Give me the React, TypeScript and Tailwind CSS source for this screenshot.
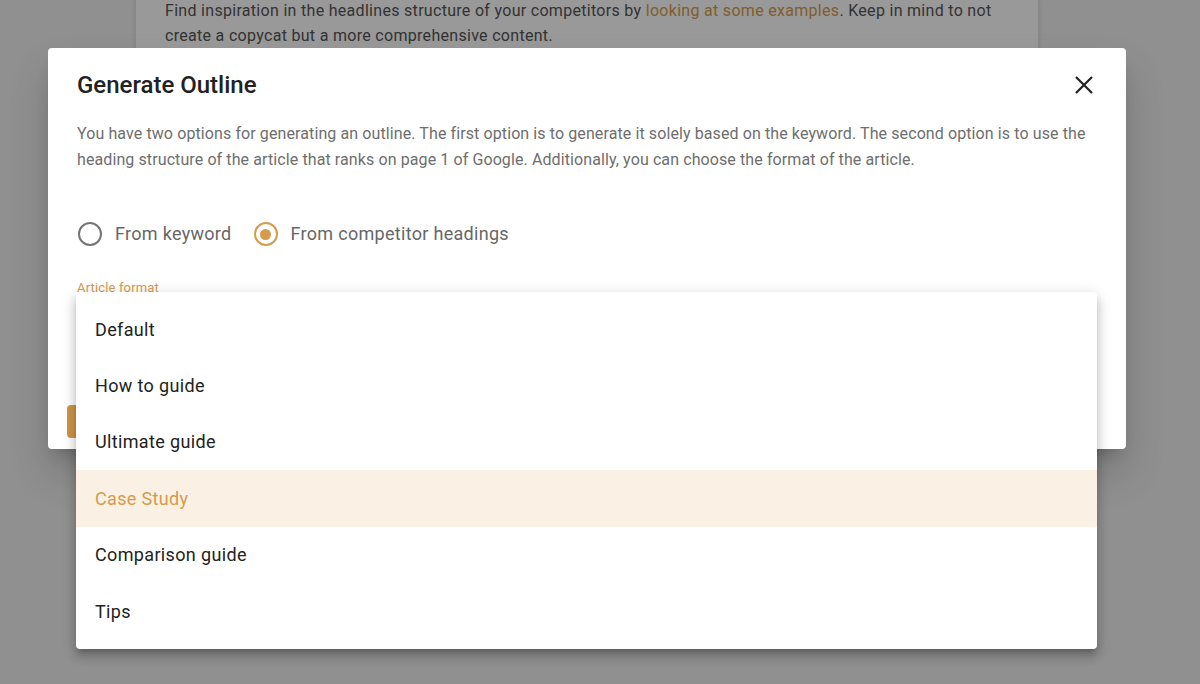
import type { ReactNode } from 'react';

const formats = ['Default', 'How to guide', 'Ultimate guide', 'Case Study', 'Comparison guide', 'Tips'];

function Radio({ checked, children }: { checked?: boolean; children: ReactNode }) {
  return (
    <label className="flex items-center gap-[13px]">
      <span
        className={
          checked
            ? 'flex h-[24px] w-[24px] items-center justify-center rounded-full border-2 border-[#d59b4c]'
            : 'flex h-[24px] w-[24px] items-center justify-center rounded-full border-2 border-[#757575]'
        }
      >
        {checked && <span className="h-[11px] w-[11px] rounded-full bg-[#d59b4c]" />}
      </span>
      <span className="text-[18px] leading-[24px] tracking-[0.3px] text-[#676767]">{children}</span>
    </label>
  );
}

export default function App() {
  return (
    <div className="relative h-[684px] w-[1200px] overflow-hidden bg-[#f0f0f0] font-['Roboto',sans-serif]">
      {/* page behind the modal */}
      <div className="ml-[136px] h-[600px] w-[902px] bg-white px-[29px] shadow-[0_0_6px_rgba(0,0,0,0.15)]">
        <p className="-mt-[2px] text-[16px] leading-[25px] tracking-[0.3px] text-[#555]">
          Find inspiration in the headlines structure of your competitors by{' '}
          <span className="text-[#d59b4c]">looking at some examples</span>. Keep in mind to not create a copycat but a
          more comprehensive content.
        </p>
      </div>

      {/* backdrop */}
      <div className="absolute inset-0 bg-black/40 pl-[48px] pt-[48px]">
        <div className="relative h-[401px] w-[1078px] rounded-[4px] bg-white px-[29px] pt-[21px] shadow-[0_11px_15px_-7px_rgba(0,0,0,0.2),0_24px_38px_3px_rgba(0,0,0,0.14)]">
          <div className="flex items-center justify-between">
            <h2 className="text-[24px] font-medium leading-[32px] text-[#222]">Generate Outline</h2>
            <button className="-mr-[1px] flex h-[28px] w-[28px] items-center justify-center text-[#222]">
              <svg width="18" height="18" viewBox="0 0 18 18" fill="none" stroke="currentColor" strokeWidth="2.2">
                <path d="M1 1L17 17M17 1L1 17" />
              </svg>
            </button>
          </div>
          <p className="mt-[20px] text-[16px] leading-[26px] tracking-[0.1px] text-[#6e6e6e]">
            You have two options for generating an outline. The first option is to generate it solely based on the
            keyword. The second option is to use the heading structure of the article that ranks on page 1 of Google.
            Additionally, you can choose the format of the article.
          </p>
          <div className="mt-[40px] flex h-[42px] items-center gap-[22px] pl-[1px]">
            <Radio>From keyword</Radio>
            <Radio checked>From competitor headings</Radio>
          </div>
          <div className="mt-[25px] text-[13px] leading-[16px] tracking-[0.15px] text-[#d59b4c]">Article format</div>
          <div className="mt-[6px] h-[50px] w-[1020px] rounded-[4px] border-2 border-[#d59b4c]" />
          <div className="-ml-[10px] mt-[53px] h-[33px] w-[140px] rounded-[4px] bg-[#cf9548]" />
        </div>
      </div>

      {/* dropdown menu */}
      <div className="absolute left-[76px] top-[292px] w-[1021px] rounded-[4px] bg-white pb-[10px] pt-[9px] shadow-[0_5px_5px_-3px_rgba(0,0,0,0.2),0_8px_10px_1px_rgba(0,0,0,0.14),0_3px_14px_2px_rgba(0,0,0,0.12)]">
        {formats.map((f) => (
          <div
            key={f}
            className={
              f === 'Case Study'
                ? 'flex h-[56.4px] items-center bg-[#faf1e4] px-[19px] text-[18px] tracking-[0.35px] text-[#d59b4c]'
                : 'flex h-[56.4px] items-center px-[19px] text-[18px] tracking-[0.35px] text-[#222]'
            }
          >
            {f}
          </div>
        ))}
      </div>
    </div>
  );
}
